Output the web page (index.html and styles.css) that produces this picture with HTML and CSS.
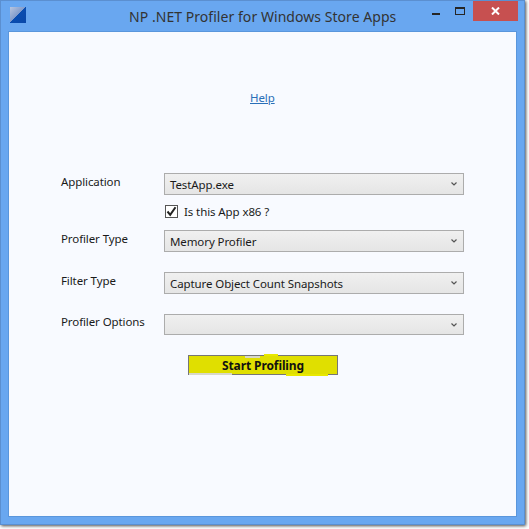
FILE: index.html
```html
<!DOCTYPE html>
<html lang="en">
<head>
  <meta charset="UTF-8" />
  <title>NP .NET Profiler for Windows Store Apps</title>
  <link rel="stylesheet" href="styles.css">
</head>
<body>
  <div class="window">
    <div class="title-bar">
      <div class="app-icon"></div>
      <div class="title">NP .NET Profiler for Windows Store Apps</div>
      <div class="controls">
        <div class="btn-min"></div>
        <div class="btn-max"></div>
        <div class="btn-close">
          <svg width="9" height="8" viewBox="0 0 9 8">
            <path d="M1 0.5 L8 7.5 M8 0.5 L1 7.5" stroke="#fff" stroke-width="2" fill="none" />
          </svg>
        </div>
      </div>
    </div>
    <div class="client">
      <div class="help-row"><a class="help" href="#">Help</a></div>
      <div class="form">
        <div class="row row-app">
          <label>Application</label>
          <div class="combo"><span>TestApp.exe</span><svg class="chev" width="6" height="4" viewBox="0 0 6 4"><path d="M0.5 0.5 L3 3 L5.5 0.5" stroke="#555" stroke-width="1.2" fill="none" /></svg></div>
        </div>
        <div class="check-row">
          <div class="check">
            <svg width="11" height="11" viewBox="0 0 11 11"><path d="M1.5 5.5 L4.2 8.8 L9.5 1.2" stroke="#222" stroke-width="2" fill="none" /></svg>
          </div>
          <span>Is this App x86 ?</span>
        </div>
        <div class="row row-type">
          <label>Profiler Type</label>
          <div class="combo"><span>Memory Profiler</span><svg class="chev" width="6" height="4" viewBox="0 0 6 4"><path d="M0.5 0.5 L3 3 L5.5 0.5" stroke="#555" stroke-width="1.2" fill="none" /></svg></div>
        </div>
        <div class="row row-filter">
          <label>Filter Type</label>
          <div class="combo"><span>Capture Object Count Snapshots</span><svg class="chev" width="6" height="4" viewBox="0 0 6 4"><path d="M0.5 0.5 L3 3 L5.5 0.5" stroke="#555" stroke-width="1.2" fill="none" /></svg></div>
        </div>
        <div class="row row-options">
          <label>Profiler Options</label>
          <div class="combo combo-short"><span></span><svg class="chev" width="6" height="4" viewBox="0 0 6 4"><path d="M0.5 0.5 L3 3 L5.5 0.5" stroke="#555" stroke-width="1.2" fill="none" /></svg></div>
        </div>
        <div class="start-row"><div class="start">Start Profiling</div></div>
      </div>
    </div>
  </div>
</body>
</html>
```

FILE: styles.css
```css
* {
  box-sizing: border-box;
}

html, body {
  margin: 0;
  padding: 0;
  width: 529px;
  height: 529px;
  background: #fff;
  overflow: hidden;
}

body {
  font-family: "Noto Sans", "Open Sans", sans-serif;
  font-size: 11.5px;
  letter-spacing: -0.1px;
  color: #1a1a1a;
}

.window {
  width: 525px;
  height: 525px;
  background: #69a7f0;
  border: 1px solid #5b8fd0;
  box-shadow: 1px 1px 3px rgba(0, 0, 0, 0.7);
  padding: 0 7px 7px 7px;
  display: flex;
  flex-direction: column;
}

.title-bar {
  height: 30px;
  flex: none;
  display: flex;
  position: relative;
}

.app-icon {
  width: 16px;
  height: 16px;
  margin: 6px 0 0 2px;
  background: linear-gradient(135deg, #b9c6df 0%, #7f9acb 49%, #0a4db0 50%, #0a48a8 100%);
}

.title {
  position: absolute;
  left: 121px;
  top: 6px;
  font-size: 14px;
  letter-spacing: 0.05px;
  line-height: 20px;
  color: #333;
  white-space: nowrap;
}

.controls {
  margin-left: auto;
  display: flex;
  margin-right: -1px;
}

.btn-min {
  width: 8px;
  height: 2px;
  margin: 12px 15px 0 0;
  background: #262626;
}

.btn-max {
  width: 10px;
  height: 8px;
  margin: 6px 8px 0 0;
  border: 1px solid #262626;
  border-top-width: 2px;
}

.btn-close {
  width: 45px;
  height: 20px;
  background: #c75050;
  display: flex;
  align-items: center;
  justify-content: center;
}

.client {
  flex: 1;
  background: #f8faff;
  border: 1px solid #5a96dc;
  padding: 0 0 0 52px;
}

.help-row {
  height: 133px;
  padding: 56px 0 0 189px;
  line-height: 20px;
}

.help {
  color: #2a6fb8;
  text-decoration: underline;
}

.form {
  width: 403px;
}

.row {
  display: flex;
  align-items: flex-start;
}

.row label {
  width: 103px;
  flex: none;
  line-height: 16px;
  margin-top: 1px;
}

.row-app {
  margin-top: 8px;
}

.combo {
  width: 300px;
  height: 22px;
  padding: 0 6px 0 5px;
  background: linear-gradient(#f0f0f0, #e5e5e5);
  border: 1px solid #acacac;
  display: flex;
  align-items: center;
  justify-content: space-between;
}

.combo-short {
  height: 21px;
}

.check-row {
  display: flex;
  align-items: center;
  height: 13px;
  margin: 10px 0 0 104px;
  gap: 6px;
}

.check {
  width: 13px;
  height: 13px;
  border: 1px solid #555;
  background: #fff;
  display: flex;
  align-items: center;
  justify-content: center;
}

.row-type {
  margin-top: 12px;
}

.row-filter {
  margin-top: 20px;
}

.row-options {
  margin-top: 20px;
}

.row-options label {
  margin-top: 0;
}

.start-row {
  margin: 20px 0 0 127px;
}

.start {
  width: 150px;
  height: 20px;
  position: relative;
  background: #e0df00;
  border: 1px solid #767676;
  font-size: 12px;
  font-weight: bold;
  letter-spacing: -0.1px;
  text-align: center;
  line-height: 19px;
  color: #111;
}

/* marker smudges left on the button in the capture */
.start::before {
  content: "";
  position: absolute;
  left: 56px;
  top: 0;
  width: 15px;
  height: 2px;
  background: #d8d8c8;
  box-shadow: -56px 17px 0 0 #d8d8c8, -42px 17px 0 0 #d8d8c8, -28px 17px 0 0 #d8d8c8;
}

.start::after {
  content: "";
  position: absolute;
  left: 75px;
  top: -2px;
  width: 14px;
  height: 2px;
  background: #e8e800;
  box-shadow: 22px 20px 0 0 #e8e800, 36px 20px 0 0 #e8e800, 50px 20px 0 0 #e8e800;
}
```
